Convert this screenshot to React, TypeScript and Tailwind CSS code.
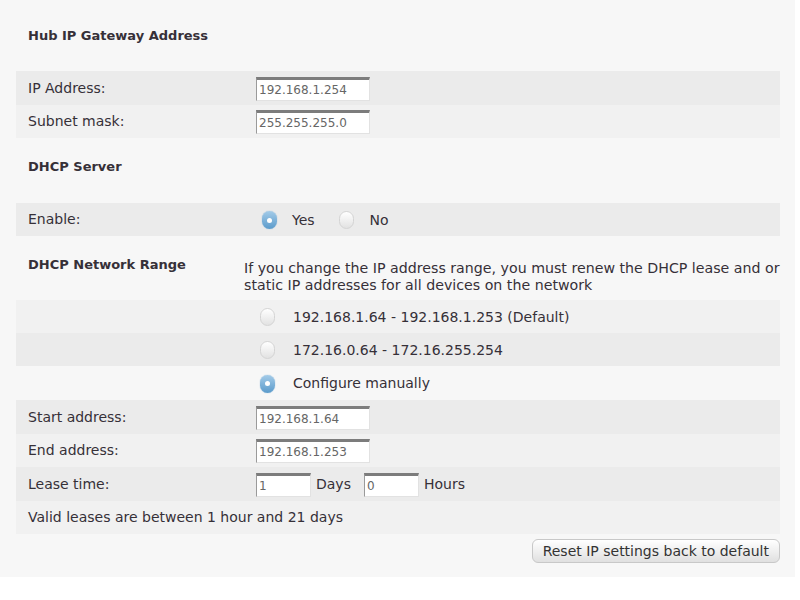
import React from "react";

const font = { fontFamily: '"DejaVu Sans", Verdana, sans-serif' };

function TextBox({ value, w = "w-[114px]" }: { value: string; w?: string }) {
  return (
    <div
      className={`${w} h-[24px] bg-white border-t-[3px] border-t-[#7c7c7c] border-l border-l-[#9a9a9a] border-r border-r-[#e2e2e2] border-b border-b-[#e2e2e2] flex items-center pl-[2px] text-[12px] text-[#666]`}
    >
      {value}
    </div>
  );
}

function Radio({ on }: { on?: boolean }) {
  if (on)
    return (
      <span className="inline-flex items-center justify-center w-[15px] h-[18px] rounded-full bg-gradient-to-b from-[#a3cbe8] to-[#5b9bcb] shadow-[0_0_1px_#6fa6d2]">
        <span className="w-[5px] h-[5px] rounded-full bg-white" />
      </span>
    );
  return (
    <span className="inline-block w-[15px] h-[18px] rounded-full border border-[#d4d4d4] bg-gradient-to-b from-[#ffffff] to-[#e2e2e2]" />
  );
}

function Row({
  label,
  tone,
  h = "h-[33px]",
  children,
}: {
  label?: string;
  tone: "dark" | "light" | "none";
  h?: string;
  children?: React.ReactNode;
}) {
  const bg = tone === "dark" ? "bg-[#ebebeb]" : tone === "light" ? "bg-[#f1f1f1]" : "";
  return (
    <div className={`flex items-center ${h} ${bg}`}>
      <div className="w-[240px] pl-3 shrink-0">{label}</div>
      <div className="flex items-center pt-px">{children}</div>
    </div>
  );
}

export default function App() {
  return (
    <div className="bg-white min-h-[600px] text-[14px] text-[#363038]" style={font}>
      <div className="w-[795px] h-[577px] bg-[#f7f7f7] pl-4 pr-[15px]">
        <div className="h-[71px] pt-[26px] pl-3 font-bold text-[13px]">Hub IP Gateway Address</div>
        <Row label="IP Address:" tone="dark" h="h-[34px]">
          <TextBox value="192.168.1.254" />
        </Row>
        <Row label="Subnet mask:" tone="light">
          <TextBox value="255.255.255.0" />
        </Row>
        <div className="h-[65px] pt-[19px] pl-3 font-bold text-[13px]">DHCP Server</div>
        <Row label="Enable:" tone="dark">
          <span className="ml-[6px] flex items-center">
            <Radio on />
          </span>
          <span className="ml-[15px]">Yes</span>
          <span className="ml-[24px] flex items-center">
            <Radio />
          </span>
          <span className="ml-[16px]">No</span>
        </Row>
        <div className="h-[64px] flex pt-[19px]">
          <div className="w-[228px] pl-3 shrink-0 font-bold text-[13px]">DHCP Network Range</div>
          <div className="leading-[17px] pt-[5px] w-[540px] text-[14.2px]">
            If you change the IP address range, you must renew the DHCP lease and or static IP
            addresses for all devices on the network
          </div>
        </div>
        <Row tone="light">
          <span className="ml-[4px] flex items-center">
            <Radio />
          </span>
          <span className="ml-[18px]">192.168.1.64 - 192.168.1.253 (Default)</span>
        </Row>
        <Row tone="dark">
          <span className="ml-[4px] flex items-center">
            <Radio />
          </span>
          <span className="ml-[18px]">172.16.0.64 - 172.16.255.254</span>
        </Row>
        <Row tone="none" h="h-[34px]">
          <span className="ml-[4px] flex items-center">
            <Radio on />
          </span>
          <span className="ml-[18px]">Configure manually</span>
        </Row>
        <Row label="Start address:" tone="dark" h="h-[34px]">
          <TextBox value="192.168.1.64" />
        </Row>
        <Row label="End address:" tone="light">
          <TextBox value="192.168.1.253" />
        </Row>
        <Row label="Lease time:" tone="dark" h="h-[34px]">
          <TextBox value="1" w="w-[55px]" />
          <span className="ml-[5px]">Days</span>
          <span className="ml-[13px]">
            <TextBox value="0" w="w-[55px]" />
          </span>
          <span className="ml-[5px]">Hours</span>
        </Row>
        <div className="h-[33px] flex items-center pl-3 bg-[#f1f1f1]">
          Valid leases are between 1 hour and 21 days
        </div>
        <div className="flex justify-end pt-[5px]">
          <button className="h-[24px] px-[10px] rounded-[6px] border border-[#c8c8c8] bg-gradient-to-b from-[#ffffff] to-[#e0e0e0] text-[14px] text-[#333] leading-none">
            Reset IP settings back to default
          </button>
        </div>
      </div>
    </div>
  );
}
